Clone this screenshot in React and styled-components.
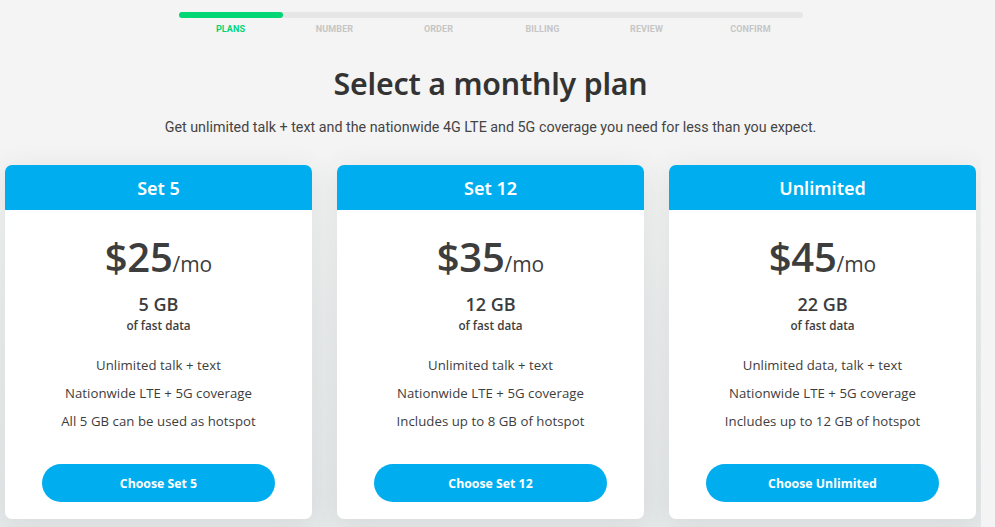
import React from "react";
import styled, { createGlobalStyle } from "styled-components";

const Global = createGlobalStyle`
  html, body { margin: 0; padding: 0; background: #f4f4f4; }
  body { font-family: Lato, "Open Sans", sans-serif; color: #3d3d3d; }
  * { box-sizing: border-box; }
`;

const Page = styled.div`
  width: 981px;
  height: 527px;
  overflow: hidden;
  background: linear-gradient(180deg, #f4f4f4 0%, #f4f4f4 30%, #eceeee 60%, #e6e9e9 100%);
`;

const Container = styled.div`
  width: 971px;
  margin: 0 auto;
  display: flex;
  flex-direction: column;
  align-items: center;
`;

const Stepper = styled.div`
  width: 624px;
  margin-top: 12px;
`;

const Track = styled.div`
  height: 6px;
  border-radius: 3px;
  background: #e6e6e6;
  display: flex;
`;

const Fill = styled.div`
  width: ${(p) => p.$pct}%;
  background: #00d673;
  border-radius: 3px;
`;

const Steps = styled.div`
  display: grid;
  grid-template-columns: repeat(6, 1fr);
  margin-top: 6px;
`;

const Step = styled.div`
  text-align: center;
  font-family: Roboto, "Liberation Sans", sans-serif;
  font-size: 9px;
  font-weight: 700;
  letter-spacing: 0.1px;
  color: ${(p) => (p.$active ? "#00d673" : "#c6c6c6")};
`;

const Title = styled.h1`
  margin: 30px 0 0;
  font-family: "Noto Sans", Lato, sans-serif;
  font-size: 30.3px;
  font-weight: 600;
  color: #333;
  line-height: 40px;
  letter-spacing: -0.2px;
`;

const Subtitle = styled.p`
  margin: 14px 0 0;
  font-family: Roboto, "Liberation Sans", sans-serif;
  font-size: 14.3px;
  color: #444;
  line-height: 18px;
`;

const Cards = styled.div`
  display: grid;
  grid-template-columns: repeat(3, 307px);
  gap: 25px;
  margin-top: 29px;
  width: 100%;
`;

const Card = styled.div`
  background: #fff;
  border-radius: 7px;
  overflow: hidden;
  height: 354px;
  box-shadow: 0 4px 28px rgba(60, 70, 70, 0.1);
  display: flex;
  flex-direction: column;
  align-items: center;
`;

const CardHeader = styled.div`
  width: 100%;
  height: 45px;
  background: #00aeef;
  color: #fff;
  display: flex;
  align-items: center;
  justify-content: center;
  font-family: "Noto Sans", Lato, sans-serif;
  font-size: 18px;
  font-weight: 600;
`;

const Price = styled.div`
  margin-top: 21px;
  display: flex;
  align-items: baseline;
  font-family: "Open Sans", Lato, sans-serif;
  color: #3d3d3d;
  line-height: 52px;
`;

const Amount = styled.span`
  font-size: 40px;
  font-weight: 600;
  letter-spacing: -0.3px;
`;

const Per = styled.span`
  font-size: 21px;
  font-weight: 500;
`;

const Data = styled.div`
  margin-top: 2px;
  font-family: "Open Sans", Lato, sans-serif;
  font-size: 18px;
  font-weight: 600;
  line-height: 24px;
`;

const DataNote = styled.div`
  margin-top: 2px;
  font-family: "Open Sans", Lato, sans-serif;
  font-size: 11.7px;
  font-weight: 600;
  line-height: 14px;
`;

const Features = styled.ul`
  list-style: none;
  margin: 24px 0 0;
  padding: 0;
  display: flex;
  flex-direction: column;
  gap: 10px;
  text-align: center;
`;

const Feature = styled.li`
  font-family: "Open Sans", Lato, sans-serif;
  font-size: 13.2px;
  line-height: 18px;
  letter-spacing: 0.05px;
  color: #3d3d3d;
`;

const Button = styled.button`
  margin-top: auto;
  margin-bottom: 17px;
  width: 233px;
  height: 38px;
  border: none;
  border-radius: 19px;
  background: #00aeef;
  color: #fff;
  font-family: "Open Sans", Lato, sans-serif;
  font-size: 12.3px;
  font-weight: 700;
  cursor: pointer;
`;

const steps = ["PLANS", "NUMBER", "ORDER", "BILLING", "REVIEW", "CONFIRM"];

const plans = [
  {
    name: "Set 5",
    price: "$25",
    data: "5 GB",
    features: ["Unlimited talk + text", "Nationwide LTE + 5G coverage", "All 5 GB can be used as hotspot"],
  },
  {
    name: "Set 12",
    price: "$35",
    data: "12 GB",
    features: ["Unlimited talk + text", "Nationwide LTE + 5G coverage", "Includes up to 8 GB of hotspot"],
  },
  {
    name: "Unlimited",
    price: "$45",
    data: "22 GB",
    features: ["Unlimited data, talk + text", "Nationwide LTE + 5G coverage", "Includes up to 12 GB of hotspot"],
  },
];

export default function App() {
  return (
    <Page>
      <Global />
      <Container>
        <Stepper>
          <Track>
            <Fill $pct={100 / 6} />
          </Track>
          <Steps>
            {steps.map((s, i) => (
              <Step key={s} $active={i === 0}>{s}</Step>
            ))}
          </Steps>
        </Stepper>
        <Title>Select a monthly plan</Title>
        <Subtitle>
          Get unlimited talk + text and the nationwide 4G LTE and 5G coverage you need for less than you expect.
        </Subtitle>
        <Cards>
          {plans.map((p) => (
            <Card key={p.name}>
              <CardHeader>{p.name}</CardHeader>
              <Price>
                <Amount>{p.price}</Amount>
                <Per>/mo</Per>
              </Price>
              <Data>{p.data}</Data>
              <DataNote>of fast data</DataNote>
              <Features>
                {p.features.map((f) => (
                  <Feature key={f}>{f}</Feature>
                ))}
              </Features>
              <Button>Choose {p.name}</Button>
            </Card>
          ))}
        </Cards>
      </Container>
    </Page>
  );
}
